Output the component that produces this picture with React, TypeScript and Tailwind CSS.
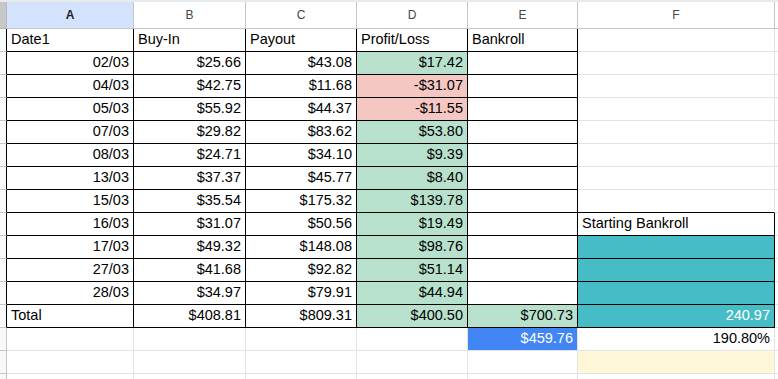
import React from "react";

type Cell = { t?: string; align?: "l" | "r"; bg?: string; white?: boolean };

const G = "bg-[#b7e1cd]";
const R = "bg-[#f4c7c3]";
const T = "bg-[#46bdc6]";

const data: [string, string, string, string, string][] = [
  ["02/03", "$25.66", "$43.08", "$17.42", "g"],
  ["04/03", "$42.75", "$11.68", "-$31.07", "r"],
  ["05/03", "$55.92", "$44.37", "-$11.55", "r"],
  ["07/03", "$29.82", "$83.62", "$53.80", "g"],
  ["08/03", "$24.71", "$34.10", "$9.39", "g"],
  ["13/03", "$37.37", "$45.77", "$8.40", "g"],
  ["15/03", "$35.54", "$175.32", "$139.78", "g"],
  ["16/03", "$31.07", "$50.56", "$19.49", "g"],
  ["17/03", "$49.32", "$148.08", "$98.76", "g"],
  ["27/03", "$41.68", "$92.82", "$51.14", "g"],
  ["28/03", "$34.97", "$79.91", "$44.94", "g"],
];

function buildRows(): Cell[][] {
  const rows: Cell[][] = [];
  rows.push([
    { t: "Date1", align: "l" },
    { t: "Buy-In", align: "l" },
    { t: "Payout", align: "l" },
    { t: "Profit/Loss", align: "l" },
    { t: "Bankroll", align: "l" },
    {},
  ]);
  data.forEach((d, i) => {
    const f: Cell =
      i === 7
        ? { t: "Starting Bankroll", align: "l" }
        : i >= 8
        ? { bg: T }
        : {};
    rows.push([
      { t: d[0], align: "r" },
      { t: d[1], align: "r" },
      { t: d[2], align: "r" },
      { t: d[3], align: "r", bg: d[4] === "g" ? G : R },
      {},
      f,
    ]);
  });
  rows.push([
    { t: "Total", align: "l" },
    { t: "$408.81", align: "r" },
    { t: "$809.31", align: "r" },
    { t: "$400.50", align: "r", bg: G },
    { t: "$700.73", align: "r", bg: G },
    { t: "240.97", align: "r", bg: T, white: true },
  ]);
  rows.push([
    {},
    {},
    {},
    {},
    { t: "$459.76", align: "r", bg: "bg-[#4285f4]", white: true },
    { t: "190.80%", align: "r" },
  ]);
  rows.push([{}, {}, {}, {}, {}, { bg: "bg-[#fef8d9]" }]);
  rows.push([{}, {}, {}, {}, {}, {}]);
  return rows;
}

const widths = ["w-[127px]", "w-[112px]", "w-[111px]", "w-[111px]", "w-[110px]", "w-[197px]"];
const letters = ["A", "B", "C", "D", "E", "F"];

function bordered(r: number, c: number) {
  if (r >= 1 && r <= 13 && c >= 0 && c <= 4) return true;
  if (r >= 9 && r <= 13 && c === 5) return true;
  return false;
}

export default function App() {
  const rows = buildRows();
  return (
    <div
      className="w-[778px] h-[379px] overflow-hidden bg-white text-black"
      style={{ fontFamily: '"Liberation Sans", Arial, sans-serif' }}
    >
      {/* header row */}
      <div className="flex h-[29px] border-t-2 border-[#e8eaed]">
        <div className="w-[7px] shrink-0 bg-[#c7c7c7] border-r border-b border-[#b8b8b8]" />
        {letters.map((l, i) => (
          <div
            key={l}
            className={`${widths[i]} shrink-0 flex items-center justify-center border-r border-b border-[#c4c7c5] text-[12px] ${
              i === 0 ? "bg-[#d3e3fd] font-bold text-[#1f1f1f]" : "bg-white text-[#444746]"
            }`}
          >
            {l}
          </div>
        ))}
        <div className="w-[3px] shrink-0 bg-white border-b border-[#c4c7c5]" />
      </div>
      {rows.map((row, ri) => {
        const r = ri + 1;
        return (
          <div key={ri} className="flex h-[23px]">
            <div
              className={`w-[7px] shrink-0 bg-[#f8f9fa] border-b border-[#c4c7c5] border-r ${
                bordered(r, 0) ? "border-r-black" : "border-r-[#c4c7c5]"
              }`}
            />
            {row.map((cell, c) => {
              const rb = bordered(r, c) || bordered(r, c + 1);
              const bb = bordered(r, c) || bordered(r + 1, c);
              return (
                <div
                  key={c}
                  className={`${widths[c]} shrink-0 flex items-center px-[4px] border-r border-b whitespace-nowrap overflow-hidden text-[14.5px] ${
                    rb ? "border-r-black" : "border-r-[#e2e3e3]"
                  } ${bb ? "border-b-black" : "border-b-[#e2e3e3]"} ${cell.bg ?? "bg-white"} ${
                    cell.align === "r" ? "justify-end" : "justify-start"
                  } ${cell.white ? "text-white" : "text-black"}`}
                >
                  {cell.t ?? ""}
                </div>
              );
            })}
            <div className="w-[3px] shrink-0 bg-white border-b border-[#e2e3e3]" />
          </div>
        );
      })}
    </div>
  );
}
